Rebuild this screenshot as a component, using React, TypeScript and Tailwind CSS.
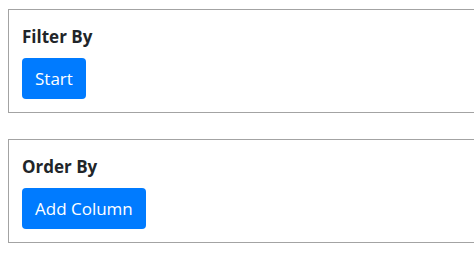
const sections = [
  { title: "Filter By", action: "Start" },
  { title: "Order By", action: "Add Column" },
];

const App = () => {
  return (
    <div className="overflow-hidden h-[253px] pl-2 pt-[9px] font-['Open_Sans',sans-serif] text-[#212529] bg-white">
      {sections.map((s, i) => (
        <div
          key={s.title}
          className={`w-[560px] border border-[#a3a3a3] px-[13px] pt-[13px] pb-[13px] ${i > 0 ? "mt-[26px]" : ""}`}
        >
          <h5 className="text-[17px] font-bold leading-[27px] mb-2">{s.title}</h5>
          <button className="h-[41px] px-[13px] rounded-[4px] bg-[#007bff] text-white text-[17px] leading-none">
            {s.action}
          </button>
        </div>
      ))}
    </div>
  );
};

export default App;
